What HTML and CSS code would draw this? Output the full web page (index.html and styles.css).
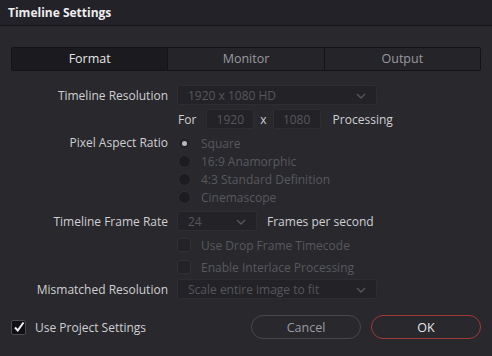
FILE: index.html
```html
<!DOCTYPE html>
<html lang="en">
<head>
  <meta charset="UTF-8">
  <title>Timeline Settings</title>
  <link rel="stylesheet" href="styles.css">
</head>
<body>

  <div class="titlebar">Timeline Settings</div>

  <div class="tabs">
    <div class="tab active">Format</div>
    <div class="tab">Monitor</div>
    <div class="tab">Output</div>
  </div>

  <div class="form">
    <div class="row r-res">
      <label>Timeline Resolution</label>
      <div class="select wide">
        <span>1920 x 1080 HD</span>
        <svg class="chev" width="10" height="6" viewBox="0 0 10 6"><path d="M1 1l4 4 4-4" fill="none" stroke="#55555a" stroke-width="1.4"/></svg>
      </div>
    </div>

    <div class="row r-for">
      <label></label>
      <div class="inline">
        <span class="lbl">For</span>
        <div class="num">1920</div>
        <span class="lbl x">x</span>
        <div class="num">1080</div>
        <span class="lbl">Processing</span>
      </div>
    </div>

    <div class="row r-par">
      <label>Pixel Aspect Ratio</label>
      <div class="radios">
        <div class="opt"><span class="radio on"></span><span>Square</span></div>
        <div class="opt"><span class="radio"></span><span>16:9 Anamorphic</span></div>
        <div class="opt"><span class="radio"></span><span>4:3 Standard Definition</span></div>
        <div class="opt"><span class="radio"></span><span>Cinemascope</span></div>
      </div>
    </div>

    <div class="row r-fps">
      <label>Timeline Frame Rate</label>
      <div class="inline">
        <div class="select short">
          <span>24</span>
          <svg class="chev" width="10" height="6" viewBox="0 0 10 6"><path d="M1 1l4 4 4-4" fill="none" stroke="#55555a" stroke-width="1.4"/></svg>
        </div>
        <span class="lbl">Frames per second</span>
      </div>
    </div>

    <div class="row r-chk">
      <label></label>
      <div class="opt"><span class="box"></span><span>Use Drop Frame Timecode</span></div>
    </div>

    <div class="row r-chk">
      <label></label>
      <div class="opt"><span class="box"></span><span>Enable Interlace Processing</span></div>
    </div>

    <div class="row r-mis">
      <label>Mismatched Resolution</label>
      <div class="select wide">
        <span>Scale entire image to fit</span>
        <svg class="chev" width="10" height="6" viewBox="0 0 10 6"><path d="M1 1l4 4 4-4" fill="none" stroke="#55555a" stroke-width="1.4"/></svg>
      </div>
    </div>
  </div>

  <div class="footer">
    <div class="project">
      <span class="check">
        <svg width="12" height="12" viewBox="0 0 12 12"><path d="M2 6.5l2.8 3L10.5 1.5" fill="none" stroke="#f2f2f2" stroke-width="2"/></svg>
      </span>
      <span>Use Project Settings</span>
    </div>
    <div class="buttons">
      <button class="btn">Cancel</button>
      <button class="btn ok">OK</button>
    </div>
  </div>

</body>
</html>
```

FILE: styles.css
```css
body {
  margin: 0;
  background-color: #28282d;
  font-family: 'Open Sans', sans-serif;
  font-size: 12px;
  color: #c8c8ca;
  width: 492px;
  height: 356px;
  overflow: hidden;
}

.titlebar {
  height: 26px;
  line-height: 25px;
  padding-left: 8px;
  background-color: #232228;
  border-bottom: 1px solid #141417;
  color: #ededee;
  font-size: 12px;
  font-weight: 700;
  box-sizing: border-box;
}

.tabs {
  display: flex;
  margin: 21px 11px 0;
  height: 22px;
  border: 1px solid #141416;
  border-radius: 2px;
  background-color: #242429;
}

.tab {
  flex: 1;
  text-align: center;
  line-height: 21px;
  color: #9a9a9e;
  font-size: 12.5px;
  border-left: 1px solid #141416;
}

.tab:first-child {
  border-left: none;
}

.tab.active {
  background-color: #1b1b1f;
  color: #e4e4e6;
}

.form {
  display: flex;
  flex-direction: column;
  margin-top: 14px;
}

.row {
  display: grid;
  grid-template-columns: 168px 1fr;
  column-gap: 9px;
  align-items: center;
}

.row label {
  text-align: right;
  color: #d0d0d2;
}

.r-res { height: 20px; }
.r-for { height: 20px; margin-top: 4px; }
.r-par { margin-top: 5px; align-items: start; }
.r-par label { line-height: 18px; }
.r-fps { height: 20px; margin-top: 5px; }
.r-chk { height: 18px; margin-top: 5px; }
.r-chk + .r-chk { margin-top: 4px; }
.r-mis { height: 20px; margin-top: 3px; }

.select {
  display: flex;
  align-items: center;
  justify-content: space-between;
  height: 20px;
  box-sizing: border-box;
  padding: 0 10px 0 10px;
  background-color: #232327;
  border: 1px solid #2d2d32;
  border-radius: 2px;
  color: #56565b;
}

.select.wide { width: 200px; }
.select.short { width: 80px; padding-right: 10px; }

.chev {
  margin-top: 1px;
}

.inline {
  display: flex;
  align-items: center;
}

.lbl {
  color: #d0d0d2;
}

.inline .lbl:first-child {
  margin-left: 1px;
  margin-right: 10px;
}

.x {
  margin: 0 6px 0 6px;
}

.num {
  width: 48px;
  height: 20px;
  box-sizing: border-box;
  line-height: 19px;
  text-align: center;
  background-color: #232327;
  border: 1px solid #2d2d32;
  border-radius: 2px;
  color: #56565b;
}

.num + .lbl:last-child {
  margin-left: 12px;
}

.select.short + .lbl {
  margin-left: 10px;
}

.radios {
  display: flex;
  flex-direction: column;
}

.opt {
  display: flex;
  align-items: center;
  height: 18px;
  color: #58585d;
}

.radio {
  width: 13px;
  height: 13px;
  margin-left: 1px;
  margin-right: 10px;
  border-radius: 50%;
  background-color: #1d1d21;
  border: 1px solid #303035;
  box-sizing: border-box;
  position: relative;
}

.radio.on {
  background-color: #232327;
  border-color: #303035;
}

.radio.on::after {
  content: "";
  position: absolute;
  left: 3px;
  top: 3px;
  width: 5px;
  height: 5px;
  border-radius: 50%;
  background-color: #b9b9bc;
}

.box {
  width: 14px;
  height: 14px;
  margin-right: 10px;
  box-sizing: border-box;
  background-color: #232327;
  border: 1px solid #303035;
  border-radius: 2px;
}

.footer {
  display: flex;
  align-items: center;
  justify-content: space-between;
  margin-top: 16px;
  padding: 0 11px;
  height: 24px;
}

.project {
  display: flex;
  align-items: center;
  color: #d0d0d2;
  font-size: 12px;
}

.check {
  display: flex;
  align-items: center;
  justify-content: center;
  width: 15px;
  height: 15px;
  margin-right: 9px;
  box-sizing: border-box;
  background-color: #111113;
  border: 1px solid #4a4a4f;
  border-radius: 2px;
}

.buttons {
  display: flex;
  gap: 10px;
}

.btn {
  width: 110px;
  height: 24px;
  border-radius: 12px;
  background-color: #28282d;
  border: 1px solid #48484d;
  color: #9c9ca0;
  font-family: 'Open Sans', sans-serif;
  font-size: 12.5px;
  padding: 0;
}

.btn.ok {
  border-color: #a23a3a;
  color: #e6e6e8;
}
```
